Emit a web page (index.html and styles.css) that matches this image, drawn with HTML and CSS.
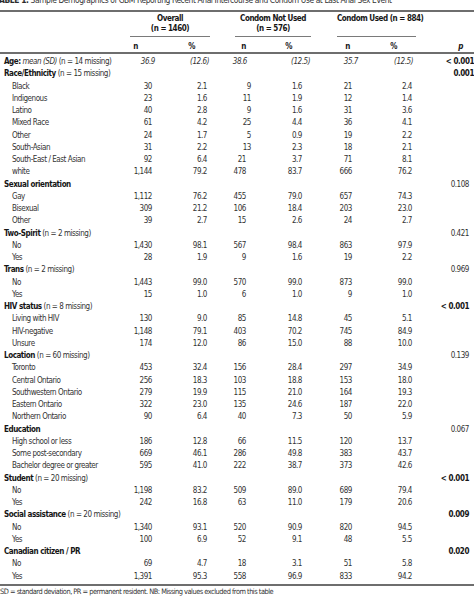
FILE: index.html
```html
<!DOCTYPE html>
<html>
<head>
<meta charset="utf-8">
<link rel="stylesheet" href="styles.css">
</head>
<body>
<div class="title"><b>TABLE 1.</b> Sample Demographics of GBM Reporting Recent Anal Intercourse and Condom Use at Last Anal Sex Event</div>
<div class="tbl">
  <div class="ghead">
    <div class="grp g1"><div>Overall</div><div>(n = 1460)</div></div>
    <div class="grp g2"><div>Condom Not Used</div><div>(n = 576)</div></div>
    <div class="grp g3"><div>Condom Used (n = 884)</div></div>
  </div>
  <div class="row chead"><span></span><span>n</span><span>%</span><span>n</span><span>%</span><span>n</span><span>%</span><span class="pp">p</span></div>
  <div class="body">
    <div class="row cat age"><span class="lbl"><b>Age:</b> <i>mean (SD)</i> (n = 14 missing)</span><span>36.9</span><span>(12.6)</span><span>38.6</span><span>(12.5)</span><span>35.7</span><span>(12.5)</span><span class="p sig">&lt; 0.001</span></div>
    <div class="row cat sh"><span class="lbl"><b>Race/Ethnicity</b> (n = 15 missing)</span><span class="p sig">0.001</span></div>
    <div class="row sub sh"><span class="lbl">Black</span><span>30</span><span>2.1</span><span>9</span><span>1.6</span><span>21</span><span>2.4</span></div>
    <div class="row sub sh"><span class="lbl">Indigenous</span><span>23</span><span>1.6</span><span>11</span><span>1.9</span><span>12</span><span>1.4</span></div>
    <div class="row sub sh"><span class="lbl">Latino</span><span>40</span><span>2.8</span><span>9</span><span>1.6</span><span>31</span><span>3.6</span></div>
    <div class="row sub sh"><span class="lbl">Mixed Race</span><span>61</span><span>4.2</span><span>25</span><span>4.4</span><span>36</span><span>4.1</span></div>
    <div class="row sub sh"><span class="lbl">Other</span><span>24</span><span>1.7</span><span>5</span><span>0.9</span><span>19</span><span>2.2</span></div>
    <div class="row sub sh"><span class="lbl">South-Asian</span><span>31</span><span>2.2</span><span>13</span><span>2.3</span><span>18</span><span>2.1</span></div>
    <div class="row sub"><span class="lbl">South-East / East Asian</span><span>92</span><span>6.4</span><span>21</span><span>3.7</span><span>71</span><span>8.1</span></div>
    <div class="row sub"><span class="lbl">white</span><span>1,144</span><span>79.2</span><span>478</span><span>83.7</span><span>666</span><span>76.2</span></div>
    <div class="row cat"><span class="lbl"><b>Sexual orientation</b></span><span class="p">0.108</span></div>
    <div class="row sub"><span class="lbl">Gay</span><span>1,112</span><span>76.2</span><span>455</span><span>79.0</span><span>657</span><span>74.3</span></div>
    <div class="row sub"><span class="lbl">Bisexual</span><span>309</span><span>21.2</span><span>106</span><span>18.4</span><span>203</span><span>23.0</span></div>
    <div class="row sub"><span class="lbl">Other</span><span>39</span><span>2.7</span><span>15</span><span>2.6</span><span>24</span><span>2.7</span></div>
    <div class="row cat"><span class="lbl"><b>Two-Spirit</b> (n = 2 missing)</span><span class="p">0.421</span></div>
    <div class="row sub"><span class="lbl">No</span><span>1,430</span><span>98.1</span><span>567</span><span>98.4</span><span>863</span><span>97.9</span></div>
    <div class="row sub"><span class="lbl">Yes</span><span>28</span><span>1.9</span><span>9</span><span>1.6</span><span>19</span><span>2.2</span></div>
    <div class="row cat"><span class="lbl"><b>Trans</b> (n = 2 missing)</span><span class="p">0.969</span></div>
    <div class="row sub"><span class="lbl">No</span><span>1,443</span><span>99.0</span><span>570</span><span>99.0</span><span>873</span><span>99.0</span></div>
    <div class="row sub"><span class="lbl">Yes</span><span>15</span><span>1.0</span><span>6</span><span>1.0</span><span>9</span><span>1.0</span></div>
    <div class="row cat"><span class="lbl"><b>HIV status</b> (n = 8 missing)</span><span class="p sig">&lt; 0.001</span></div>
    <div class="row sub"><span class="lbl">Living with HIV</span><span>130</span><span>9.0</span><span>85</span><span>14.8</span><span>45</span><span>5.1</span></div>
    <div class="row sub"><span class="lbl">HIV-negative</span><span>1,148</span><span>79.1</span><span>403</span><span>70.2</span><span>745</span><span>84.9</span></div>
    <div class="row sub"><span class="lbl">Unsure</span><span>174</span><span>12.0</span><span>86</span><span>15.0</span><span>88</span><span>10.0</span></div>
    <div class="row cat"><span class="lbl"><b>Location</b> (n = 60 missing)</span><span class="p">0.139</span></div>
    <div class="row sub"><span class="lbl">Toronto</span><span>453</span><span>32.4</span><span>156</span><span>28.4</span><span>297</span><span>34.9</span></div>
    <div class="row sub"><span class="lbl">Central Ontario</span><span>256</span><span>18.3</span><span>103</span><span>18.8</span><span>153</span><span>18.0</span></div>
    <div class="row sub"><span class="lbl">Southwestern Ontario</span><span>279</span><span>19.9</span><span>115</span><span>21.0</span><span>164</span><span>19.3</span></div>
    <div class="row sub"><span class="lbl">Eastern Ontario</span><span>322</span><span>23.0</span><span>135</span><span>24.6</span><span>187</span><span>22.0</span></div>
    <div class="row sub"><span class="lbl">Northern Ontario</span><span>90</span><span>6.4</span><span>40</span><span>7.3</span><span>50</span><span>5.9</span></div>
    <div class="row cat"><span class="lbl"><b>Education</b></span><span class="p">0.067</span></div>
    <div class="row sub"><span class="lbl">High school or less</span><span>186</span><span>12.8</span><span>66</span><span>11.5</span><span>120</span><span>13.7</span></div>
    <div class="row sub"><span class="lbl">Some post-secondary</span><span>669</span><span>46.1</span><span>286</span><span>49.8</span><span>383</span><span>43.7</span></div>
    <div class="row sub"><span class="lbl">Bachelor degree or greater</span><span>595</span><span>41.0</span><span>222</span><span>38.7</span><span>373</span><span>42.6</span></div>
    <div class="row cat"><span class="lbl"><b>Student</b> (n = 20 missing)</span><span class="p sig">&lt; 0.001</span></div>
    <div class="row sub"><span class="lbl">No</span><span>1,198</span><span>83.2</span><span>509</span><span>89.0</span><span>689</span><span>79.4</span></div>
    <div class="row sub"><span class="lbl">Yes</span><span>242</span><span>16.8</span><span>63</span><span>11.0</span><span>179</span><span>20.6</span></div>
    <div class="row cat"><span class="lbl"><b>Social assistance</b> (n = 20 missing)</span><span class="p sig">0.009</span></div>
    <div class="row sub"><span class="lbl">No</span><span>1,340</span><span>93.1</span><span>520</span><span>90.9</span><span>820</span><span>94.5</span></div>
    <div class="row sub"><span class="lbl">Yes</span><span>100</span><span>6.9</span><span>52</span><span>9.1</span><span>48</span><span>5.5</span></div>
    <div class="row cat"><span class="lbl"><b>Canadian citizen / PR</b></span><span class="p sig">0.020</span></div>
    <div class="row sub"><span class="lbl">No</span><span>69</span><span>4.7</span><span>18</span><span>3.1</span><span>51</span><span>5.8</span></div>
    <div class="row sub"><span class="lbl">Yes</span><span>1,391</span><span>95.3</span><span>558</span><span>96.9</span><span>833</span><span>94.2</span></div>
  </div>
</div>
<div class="foot">SD = standard deviation, PR = permanent resident. NB: Missing values excluded from this table</div>
</body>
</html>
```
FILE: styles.css
```css
html, body {
  margin: 0;
  padding: 0;
  background: #fff;
}
body {
  font-family: "DejaVu Sans Condensed", "Liberation Sans", sans-serif;
  font-size: 8px;
  letter-spacing: -0.45px;
  color: #333;
  width: 474px;
  overflow: hidden;
}
b { color: #161616; }
.title {
  font-size: 8.4px;
  letter-spacing: -0.4px;
  line-height: 10px;
  margin-top: -5px;
  margin-left: -5px;
  white-space: nowrap;
  color: #333;
}
.title b { color: #2b2b2b; }
.tbl {
  margin-top: 5px;
  border-top: 2px solid #6e6e6e;
  border-bottom: 2px solid #6e6e6e;
  padding-bottom: 1px;
  --cols: 110px 42px 55px 39px 56px 50px 60px 57px;
}
.ghead {
  display: grid;
  grid-template-columns: var(--cols);
  padding-top: 2px;
}
.grp {
  font-weight: bold;
  color: #161616;
  text-align: center;
  line-height: 10px;
  padding-bottom: 2px;
  border-bottom: 1px solid #7a7a7a;
  align-self: start;
  white-space: nowrap;
}
.g1 { grid-column: 2 / 4; margin-left: 20px; margin-right: -3px; }
.g2 { grid-column: 4 / 6; margin-left: 28px; margin-right: -9px; }
.g3 { grid-column: 6 / 8; margin-left: 35px; margin-right: -4px; padding-bottom: 12px; }
.row {
  display: grid;
  grid-template-columns: var(--cols);
  align-items: center;
  height: 12.26px;
  line-height: 10px;
  white-space: nowrap;
}
.row > span { text-align: right; }
.row > .lbl { text-align: left; padding-left: 4px; grid-column: 1; }
.sub > .lbl { padding-left: 12px; }
.chead {
  height: auto;
  padding-top: 5px;
  padding-bottom: 0;
  font-weight: bold;
  color: #161616;
  border-bottom: 2px solid #6e6e6e;
}
.chead > span:nth-child(2) { padding-right: 14px; }
.chead > span:nth-child(3) { padding-right: 12px; }
.chead > span:nth-child(4) { padding-right: 0; }
.chead > span:nth-child(5) { padding-right: 10px; }
.chead > span:nth-child(6) { padding-right: 2px; }
.chead > span:nth-child(7) { padding-right: 15px; }
.chead > .pp { padding-right: 6px; font-style: italic; }
.body { padding-top: 2px; }
.p { grid-column: 8; }
.sig { font-weight: bold; color: #161616; }
.sh > span:nth-child(4) { margin-right: -5px; }
.cat.sh > .p { margin-right: -5px; }
.age > span:not(.lbl):not(.p) { font-style: italic; }
.age > span:nth-child(2) { margin-right: -3px; }
.age > span:nth-child(3) { margin-right: -2px; }
.age > span:nth-child(4) { margin-right: -1px; }
.age > span:nth-child(5) { margin-right: -8px; }
.age > span:nth-child(6) { margin-right: -6px; }
.age > span:nth-child(7) { margin-right: -1px; }
.age > .p { margin-right: -5px; }
.foot {
  font-size: 7.4px;
  letter-spacing: -0.5px;
  line-height: 10px;
  margin-top: 1px;
  white-space: nowrap;
  color: #333;
}
```
